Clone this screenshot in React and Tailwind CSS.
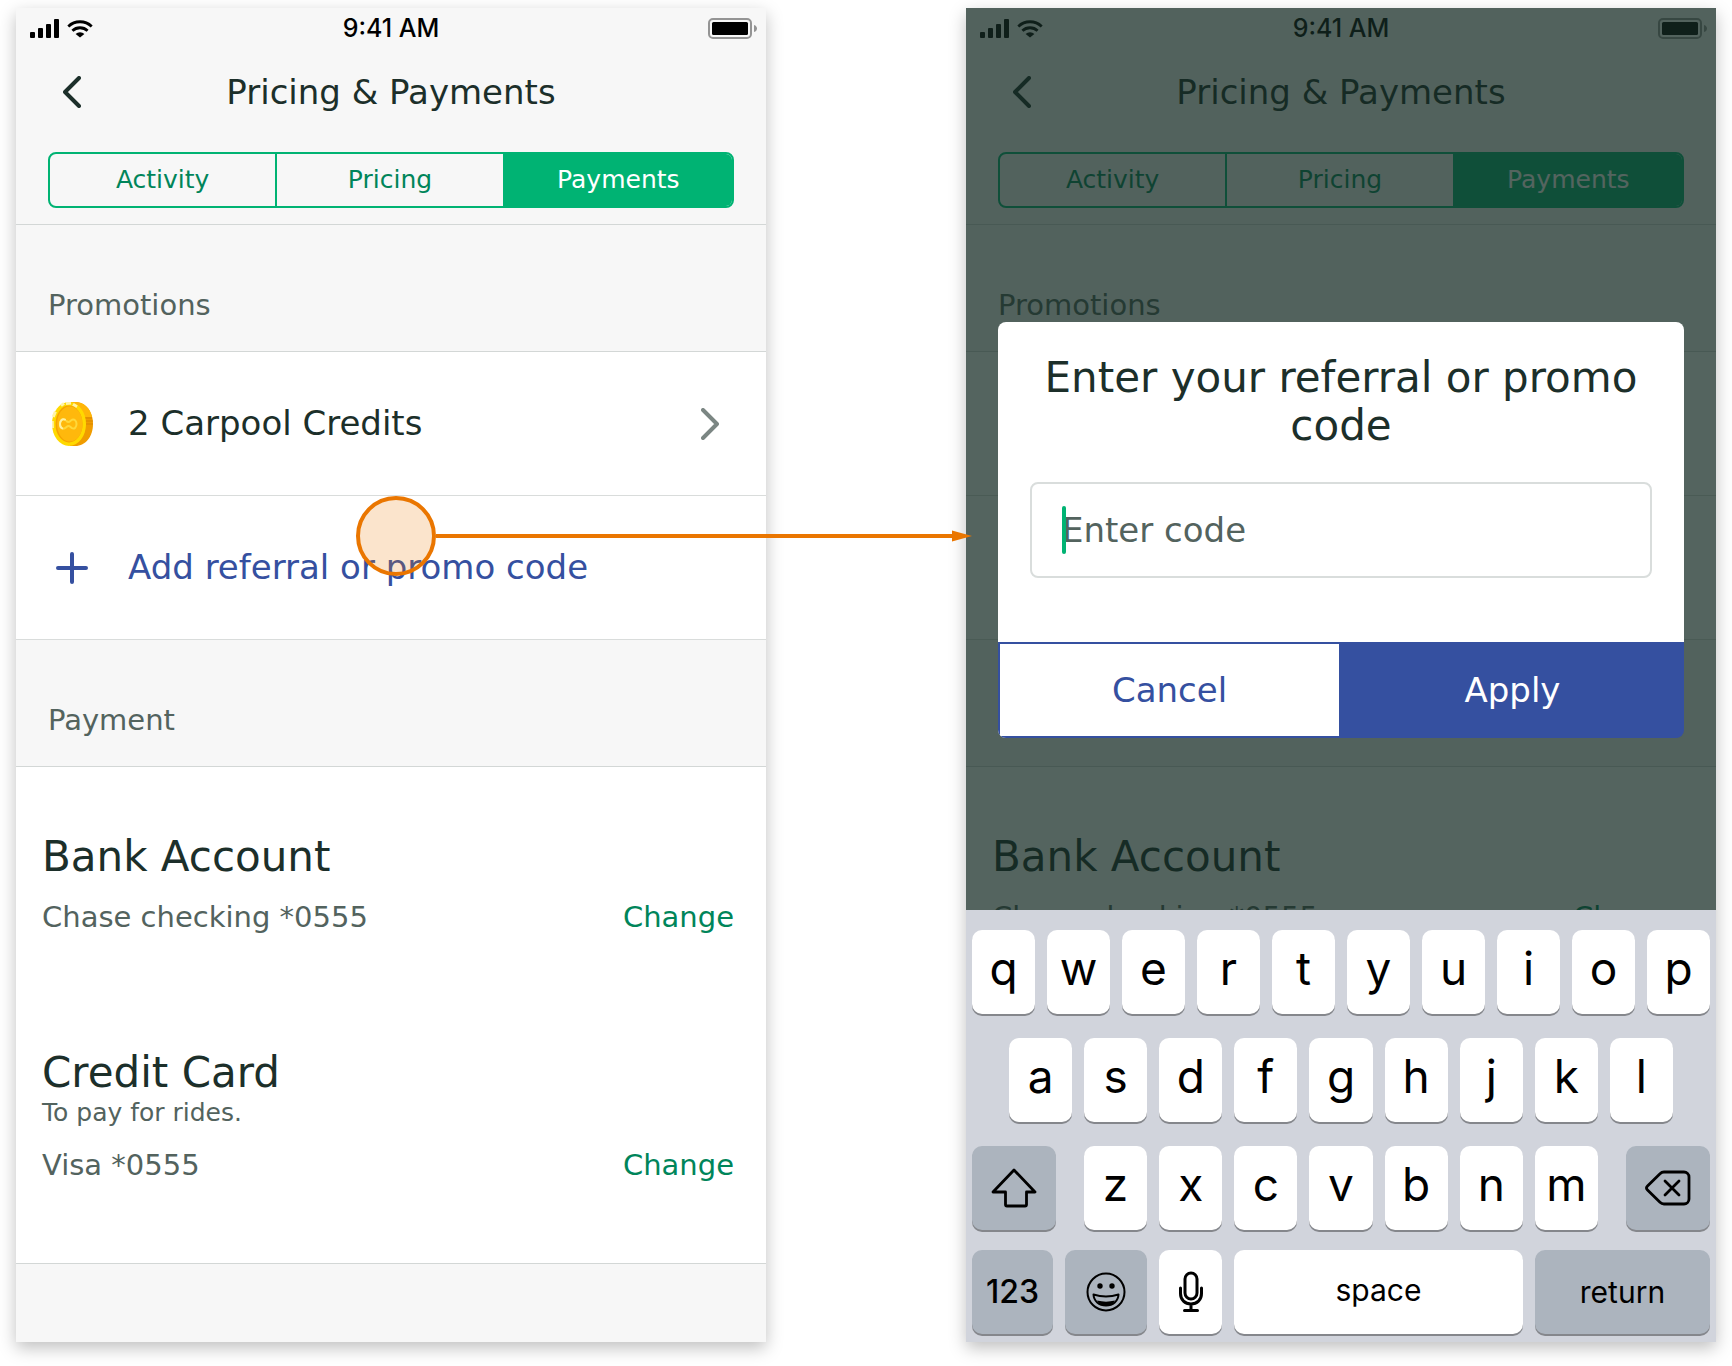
import React from "react";
import clsx from "clsx";

const StatusBar = () => {
  return (
    <div className="relative flex h-10 items-center justify-between pt-px pr-2 pl-[14px] text-black">
      <svg width="64" height="20" viewBox="0 0 64 20" aria-label="Signal">
        <rect x="0" y="13" width="5" height="6" rx="1" />
        <rect x="8" y="9" width="5" height="10" rx="1" />
        <rect x="16" y="5" width="5" height="14" rx="1" />
        <rect x="24" y="0" width="5" height="19" rx="1" />
        <g fill="none" stroke="currentColor" strokeWidth="2.8">
          <path d="M38.3 7.4a17 17 0 0 1 23.4 0" />
          <path d="M42.4 11.8a11 11 0 0 1 15.2 0" />
        </g>
        <path d="M45.6 15a6.2 6.2 0 0 1 8.8 0L50 18.6z" />
      </svg>
      <span className="absolute inset-x-0 text-center font-[Inter,sans-serif] text-[25px] font-medium">
        9:41 AM
      </span>
      <svg width="50" height="22" viewBox="0 0 50 22" aria-label="Battery">
        <rect
          x="1"
          y="1"
          width="42"
          height="19"
          rx="4"
          fill="none"
          stroke="#949494"
          strokeWidth="2"
        />
        <rect x="4" y="4" width="36" height="13" rx="1.5" />
        <path d="M46 7c4 1 4 6 0 7z" fill="#949494" />
      </svg>
    </div>
  );
};

const CoinIcon = () => (
  <svg width="41" height="44" viewBox="0 0 41 44" aria-hidden="true">
    <path d="M18 0h5c11 0 18 10 18 22s-7 22-18 22h-5z" fill="#f09c00" />
    <path d="M18 0h5c9 0 15 6 17 15H30z" fill="#ffb608" />
    <path d="M31 16h9M32 19h9M32 22h9" stroke="#d98600" strokeWidth="1" />
    <ellipse cx="17" cy="22" rx="17" ry="22" fill="#ffd900" />
    <path
      d="M9 3.6 12 1.4M1.2 15 3.4 9.6M.4 26 .2 19M14 1.5l5-.4M21 2.4l4 2.4"
      stroke="#fff3a8"
      strokeWidth="3"
      fill="none"
    />
    <ellipse cx="17" cy="22" rx="13.5" ry="18.5" fill="#f5a300" />
    <ellipse cx="17.8" cy="22" rx="12.7" ry="17.6" fill="#ffb80c" />
    <path
      d="M13 17.6c-3-1.2-5 1.4-5 4.4s2.2 5.6 5 4.2c1.6-.8 2-2.2 3.5-2.2s2 1.4 3.5 2.2c2.5 1.2 4.5-1.2 4.5-4.2s-2-5.2-4.5-4.2c-1.6.7-2 2.200-3.5 2.200-.8 0-1.5-.4-2-1"
      fill="none"
      stroke="#ffd83a"
      strokeWidth="2"
      strokeLinecap="round"
    />
    <path
      d="M13 17.6c-3-1.2-5 1.4-5 4.4 0 2 .8 3.8 2.2 4.4"
      fill="none"
      stroke="#fff0a0"
      strokeWidth="2"
      strokeLinecap="round"
    />
  </svg>
);

const PlusIcon = () => (
  <svg width="32" height="32" viewBox="0 0 32 32" aria-hidden="true">
    <path
      d="M16 2v28M2 16h28"
      stroke="#3550a0"
      strokeWidth="4"
      strokeLinecap="round"
    />
  </svg>
);

const Chevron = ({ direction }) => (
  <svg
    width="18"
    height="32"
    viewBox="0 0 18 32"
    fill="none"
    stroke="currentColor"
    strokeWidth="4"
    strokeLinecap="round"
    strokeLinejoin="round"
    aria-hidden="true"
  >
    <path d={direction === "left" ? "M16 2 2 16l14 14" : "M2 2l14 14L2 30"} />
  </svg>
);

const Tabs = () => {
  const tabs = ["Activity", "Pricing", "Payments"];
  return (
    <div
      role="tablist"
      className="mx-8 my-4 grid h-14 grid-cols-3 overflow-hidden rounded-lg border-2 border-[#00b373] text-[25px]"
    >
      {tabs.map((tab) => (
        <button
          key={tab}
          role="tab"
          aria-selected={tab === "Payments"}
          className={clsx(
            tab === "Payments"
              ? "bg-[#00b373] text-white"
              : "border-r-2 border-[#00b373] text-[#00855a]"
          )}
        >
          {tab}
        </button>
      ))}
    </div>
  );
};

const SectionLabel = ({ children }) => (
  <h2 className="border-b border-[#d3d7d6] px-8 pt-15 pb-[26px] text-[29px] leading-10 text-[#53635e]">
    {children}
  </h2>
);

const Account = ({ title, note, detail, className }) => (
  <div className={className}>
    <h3 className="text-[42px] leading-12 text-[#1c2f2a]">{title}</h3>
    {note && <p className="text-[25px] leading-8">{note}</p>}
    <div className="mt-4 flex justify-between text-[29px] leading-10">
      <span>{detail}</span>
      <button className="text-[#00855a]">Change</button>
    </div>
  </div>
);

// Tap target plus the arrow that leads to the next screen
const FlowArrow = () => (
  <div className="pointer-events-none absolute top-0 -right-[206px] left-1/2 z-10 -ml-[35px] flex items-center">
    <div className="size-20 rounded-full border-4 border-[#ea7600] bg-[#ea7600]/20" />
    <div className="h-1 flex-1 bg-[#ea7600]" />
    <svg width="20" height="12" viewBox="0 0 20 12" aria-hidden="true">
      <path d="M0 .5 20 6 0 11.5z" fill="#ea7600" />
    </svg>
  </div>
);

const PaymentsScreen = ({ showFlow }) => {
  return (
    <div className="bg-[#f7f7f7]">
      <header className="border-b border-[#d3d7d6]">
        <StatusBar />
        <div className="flex h-[88px] items-center justify-between px-8">
          <button
            aria-label="Back"
            className="flex size-12 items-center justify-center text-[#1c2f2a]"
          >
            <Chevron direction="left" />
          </button>
          <h1 className="text-[34px] text-[#1c2f2a]">Pricing &amp; Payments</h1>
          <div className="w-12" />
        </div>
        <Tabs />
      </header>

      <section>
        <SectionLabel>Promotions</SectionLabel>
        <div className="bg-white text-[34px]">
          <button className="flex h-36 w-full items-center gap-8 border-b border-[#d9dcdb] px-8 text-[#1c2f2a]">
            <span className="flex w-12 justify-center">
              <CoinIcon />
            </span>
            <span className="flex-1 text-left">2 Carpool Credits</span>
            <span className="flex w-12 justify-center text-[#7b8683]">
              <Chevron direction="right" />
            </span>
          </button>
          <div className="relative">
            <button className="flex h-36 w-full items-center gap-8 border-b border-[#d9dcdb] px-8 text-[#3550a0]">
              <span className="flex w-12 justify-center">
                <PlusIcon />
              </span>
              <span>Add referral or promo code</span>
            </button>
            {showFlow && <FlowArrow />}
          </div>
        </div>
      </section>

      <section>
        <SectionLabel>Payment</SectionLabel>
        <div className="border-b border-[#d3d7d6] bg-white pt-[66px] pr-8 pb-[78px] pl-[26px] text-[#53635e]">
          <Account title="Bank Account" detail="Chase checking *0555" />
          <Account
            title="Credit Card"
            note="To pay for rides."
            detail="Visa *0555"
            className="mt-28"
          />
        </div>
      </section>
      <div className="h-[78px]" />
    </div>
  );
};

const PromoDialog = () => {
  return (
    <div
      role="dialog"
      aria-labelledby="promo-title"
      className="absolute inset-x-8 top-[314px] overflow-hidden rounded-lg"
    >
      <div className="bg-white px-8 pt-8 pb-16">
        <h2
          id="promo-title"
          className="text-center text-[42px] leading-12 text-[#1c2f2a]"
        >
          Enter your referral or promo code
        </h2>
        <div className="relative mt-8">
          <input
            type="text"
            aria-label="Promo code"
            placeholder="Enter code"
            className="h-24 w-full rounded-lg border-2 border-[#d9dddc] px-[30px] text-[34px] placeholder:text-[#53635e]"
          />
          <span className="absolute top-6 left-8 h-12 w-1 rounded-full bg-[#00b373]" />
        </div>
      </div>
      <div className="grid h-24 grid-cols-2 text-[34px]">
        <button className="border-2 border-[#3550a0] bg-white text-[#3550a0]">
          Cancel
        </button>
        <button className="bg-[#3550a0] text-white">Apply</button>
      </div>
    </div>
  );
};

const Key = ({ children, label, muted, className = "flex-1 text-[46px]" }) => (
  <button
    aria-label={label}
    className={clsx(
      "flex h-[84px] items-center justify-center rounded-[10px] shadow-[0_2px_0_#85878c]",
      muted ? "bg-[#acb4be]" : "bg-white",
      className
    )}
  >
    {children}
  </button>
);

const Letters = ({ keys }) =>
  keys.split("").map((k) => (
    <Key key={k}>
      <span className="pb-2">{k}</span>
    </Key>
  ));

const Keyboard = () => {
  return (
    <div className="absolute inset-x-0 bottom-0 flex flex-col gap-6 bg-[#d1d4dc] px-[6px] pt-5 pb-2 font-[Inter,sans-serif] text-black">
      <div className="flex gap-3">
        <Letters keys="qwertyuiop" />
      </div>
      <div className="flex gap-3 px-[37px]">
        <Letters keys="asdfghjkl" />
      </div>
      <div className="flex gap-7">
        <Key label="Shift" muted className="w-[84px]">
          <svg width="46" height="40" viewBox="0 0 46 40" aria-hidden="true">
            <path
              d="M23 2 44 24h-8.5v12.5a1.5 1.5 0 0 1-1.5 1.5H16a1.5 1.5 0 0 1-1.5-1.5V24H2z"
              fill="none"
              stroke="currentColor"
              strokeWidth="2.8"
              strokeLinejoin="round"
            />
          </svg>
        </Key>
        <div className="flex flex-1 gap-3">
          <Letters keys="zxcvbnm" />
        </div>
        <Key label="Delete" muted className="w-[84px]">
          <svg width="46" height="36" viewBox="0 0 46 36" aria-hidden="true">
            <g
              fill="none"
              stroke="currentColor"
              strokeWidth="2.8"
              strokeLinecap="round"
              strokeLinejoin="round"
            >
              <path d="M19 2h20a5 5 0 0 1 5 5v22a5 5 0 0 1-5 5H19c-1.5 0-3-.7-4-1.7L2.5 20c-1.2-1.2-1.2-2.8 0-4L15 3.7C16 2.7 17.5 2 19 2z" />
              <path d="M20 11l14 14M34 11l-14 14" />
            </g>
          </svg>
        </Key>
      </div>
      <div className="-mt-1 flex gap-3 text-[30px]">
        <Key muted className="w-[81px] text-[32px] font-medium">
          123
        </Key>
        <Key label="Emoji" muted className="w-[82px]">
          <svg width="40" height="40" viewBox="0 0 40 40" aria-hidden="true">
            <circle
              cx="20"
              cy="20"
              r="18.5"
              fill="none"
              stroke="currentColor"
              strokeWidth="2"
            />
            <circle cx="14" cy="14" r="2.7" />
            <circle cx="26" cy="14" r="2.7" />
            <path
              d="M7.5 22.5c8 2.5 17 2.5 25 0-.3 6.500-5.500 11-12.500 11s-12.200-4.500-12.500-11z"
              fill="none"
              stroke="currentColor"
              strokeWidth="2"
              strokeLinejoin="round"
            />
            <path d="M11 28.500c6 1.500 12 1.500 18 0-2 3.500-5 5-9 5s-7-1.500-9-5z" />
          </svg>
        </Key>
        <Key label="Dictate" className="w-[63px]">
          <svg width="24" height="42" viewBox="0 0 24 42" aria-hidden="true">
            <g
              fill="none"
              stroke="currentColor"
              strokeWidth="3"
              strokeLinecap="round"
            >
              <rect x="6" y="2" width="12" height="26" rx="6" />
              <path d="M1.500 17v5.500C1.500 29 6 33 12 33s10.500-4 10.500-10.500V17M12 33v6.500M5.500 39.500h13" />
            </g>
          </svg>
        </Key>
        <Key className="flex-1">
          <span className="pb-1">space</span>
        </Key>
        <Key muted className="w-[175px]">
          return
        </Key>
      </div>
    </div>
  );
};

const phone = "relative flex-1 shadow-[0_6px_16px_rgba(0,0,0,0.25)]";

const App = () => {
  return (
    <main className="flex min-h-screen items-start gap-[200px] bg-white px-4 pt-2 pb-6 font-['DejaVu_Sans',sans-serif]">
      <div className={clsx(phone, "z-10")}>
        <PaymentsScreen showFlow />
      </div>
      <div className={phone}>
        <PaymentsScreen />
        <div className="absolute inset-0 bg-[#152b24]/73" />
        <PromoDialog />
        <Keyboard />
      </div>
    </main>
  );
};

export default App;
